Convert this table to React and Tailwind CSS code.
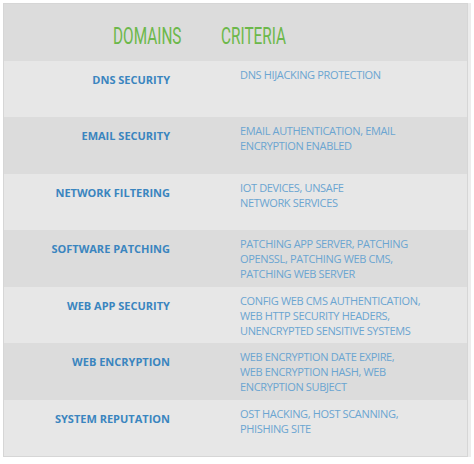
const rows = [
  { domain: 'DNS SECURITY', criteria: ['DNS HIJACKING PROTECTION'] },
  { domain: 'EMAIL SECURITY', criteria: ['EMAIL AUTHENTICATION, EMAIL', 'ENCRYPTION ENABLED'] },
  { domain: 'NETWORK FILTERING', criteria: ['IOT DEVICES, UNSAFE', 'NETWORK SERVICES'] },
  { domain: 'SOFTWARE PATCHING', criteria: ['PATCHING APP SERVER, PATCHING', 'OPENSSL, PATCHING WEB CMS,', 'PATCHING WEB SERVER'] },
  { domain: 'WEB APP SECURITY', criteria: ['CONFIG WEB CMS AUTHENTICATION,', 'WEB HTTP SECURITY HEADERS,', 'UNENCRYPTED SENSITIVE SYSTEMS'] },
  { domain: 'WEB ENCRYPTION', criteria: ['WEB ENCRYPTION DATE EXPIRE,', 'WEB ENCRYPTION HASH, WEB', 'ENCRYPTION SUBJECT'] },
  { domain: 'SYSTEM REPUTATION', criteria: ['OST HACKING, HOST SCANNING,', 'PHISHING SITE'] },
];

export default function App() {
  return (
    <div className="w-[474px] h-[464px] bg-white pt-[3px] pl-[3px] font-['Open_Sans',sans-serif]">
      <div className="w-[465px] h-[454px] border border-[#d6d6d6] shadow-[3px_0_0_#ececec] flex flex-col">
        {/* header: condensed title face, squeezed horizontally */}
        <div className="h-[57px] bg-[#dcdcdc] flex items-center text-[#6cb84a] text-[24px] leading-none pt-[6px] font-['Roboto',sans-serif]">
          <span className="ml-[109px] w-[72px] inline-block origin-left scale-x-[0.64] whitespace-nowrap">DOMAINS</span>
          <span className="ml-[36px] inline-block origin-left scale-x-[0.64] whitespace-nowrap">CRITERIA</span>
        </div>

        {rows.map((row, i) => (
          <div
            key={row.domain}
            className={`flex-1 grid grid-cols-[166px_1fr] ${i % 2 === 0 ? 'bg-[#e7e7e7]' : 'bg-[#dcdcdc]'}`}
          >
            <div className="text-right pt-[11px] text-[11px] leading-[15px] font-bold text-[#3a85bf]">
              {row.domain}
            </div>
            <div className="pl-[70px] pt-[6px] text-[11px] leading-[15px] tracking-[-0.35px] text-[#6ba5d1]">
              {row.criteria.map(line => (
                <div key={line}>{line}</div>
              ))}
            </div>
          </div>
        ))}
      </div>
    </div>
  );
}
